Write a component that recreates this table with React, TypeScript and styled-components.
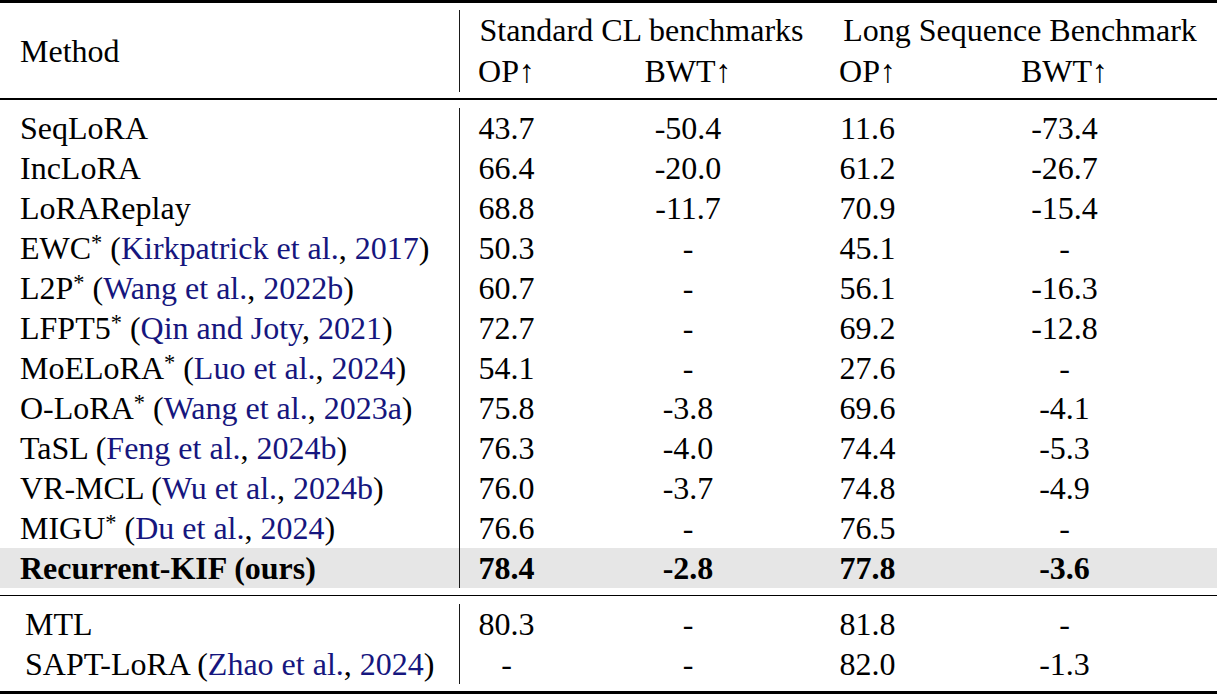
import React from 'react';
import styled, { createGlobalStyle } from 'styled-components';

const GlobalStyle = createGlobalStyle`
  html, body {
    margin: 0;
    padding: 0;
    background: #fff;
  }
  body {
    font-family: "Liberation Serif", "Times New Roman", serif;
    color: #000;
  }
`;

const COLS = '459px 94px 270px 89px 1fr';

const Table = styled.div`
  width: 1217px;
  font-size: 32px;
  line-height: 40px;
`;

const Rule = styled.div<{ $h: number }>`
  height: ${p => p.$h}px;
  background: #000;
`;

const Section = styled.div<{ $top: number; $bottom: number }>`
  padding-top: ${p => p.$top}px;
  padding-bottom: ${p => p.$bottom}px;
`;

const HeadGrid = styled.div`
  display: grid;
  grid-template-columns: ${COLS};
  grid-template-rows: 41px 41px;
  line-height: 41px;
`;

const MethodHead = styled.div`
  grid-row: 1 / 3;
  grid-column: 1;
  display: flex;
  align-items: center;
  padding-left: 20px;
`;

const GroupHead = styled.div<{ $col: string; $line?: boolean }>`
  grid-row: 1;
  grid-column: ${p => p.$col};
  text-align: center;
  white-space: nowrap;
  border-left: ${p => (p.$line ? '1px solid #1a1a1a' : 'none')};
`;

const SubHead = styled.div<{ $line?: boolean }>`
  grid-row: 2;
  text-align: center;
  white-space: nowrap;
  border-left: ${p => (p.$line ? '1px solid #1a1a1a' : 'none')};
`;

const Row = styled.div<{ $hl?: boolean; $bold?: boolean }>`
  display: grid;
  grid-template-columns: ${COLS};
  height: 40px;
  background: ${p => (p.$hl ? '#e6e6e6' : 'transparent')};
  font-weight: ${p => (p.$bold ? 700 : 400)};
`;

const NameCell = styled.div<{ $indent: number }>`
  padding-left: ${p => p.$indent}px;
  white-space: nowrap;
`;

const NumCell = styled.div<{ $line?: boolean }>`
  text-align: center;
  white-space: nowrap;
  box-sizing: border-box;
  border-left: ${p => (p.$line ? '1px solid #1a1a1a' : 'none')};
`;

const Star = styled.sup`
  font-size: 0.7em;
  line-height: 0;
  vertical-align: 0.42em;
`;

const Cite = styled.span`
  color: #16167e;
`;

type Entry = {
  name: string;
  star?: boolean;
  cite?: [string, string];
  vals: [string, string, string, string];
};

const body: Entry[] = [
  { name: 'SeqLoRA', vals: ['43.7', '-50.4', '11.6', '-73.4'] },
  { name: 'IncLoRA', vals: ['66.4', '-20.0', '61.2', '-26.7'] },
  { name: 'LoRAReplay', vals: ['68.8', '-11.7', '70.9', '-15.4'] },
  { name: 'EWC', star: true, cite: ['Kirkpatrick et al.', '2017'], vals: ['50.3', '-', '45.1', '-'] },
  { name: 'L2P', star: true, cite: ['Wang et al.', '2022b'], vals: ['60.7', '-', '56.1', '-16.3'] },
  { name: 'LFPT5', star: true, cite: ['Qin and Joty', '2021'], vals: ['72.7', '-', '69.2', '-12.8'] },
  { name: 'MoELoRA', star: true, cite: ['Luo et al.', '2024'], vals: ['54.1', '-', '27.6', '-'] },
  { name: 'O-LoRA', star: true, cite: ['Wang et al.', '2023a'], vals: ['75.8', '-3.8', '69.6', '-4.1'] },
  { name: 'TaSL', cite: ['Feng et al.', '2024b'], vals: ['76.3', '-4.0', '74.4', '-5.3'] },
  { name: 'VR-MCL', cite: ['Wu et al.', '2024b'], vals: ['76.0', '-3.7', '74.8', '-4.9'] },
  { name: 'MIGU', star: true, cite: ['Du et al.', '2024'], vals: ['76.6', '-', '76.5', '-'] },
];

const ours: Entry = { name: 'Recurrent-KIF (ours)', vals: ['78.4', '-2.8', '77.8', '-3.6'] };

const extra: Entry[] = [
  { name: 'MTL', vals: ['80.3', '-', '81.8', '-'] },
  { name: 'SAPT-LoRA', cite: ['Zhao et al.', '2024'], vals: ['-', '-', '82.0', '-1.3'] },
];

const DataRow = ({ e, indent = 20, hl = false }: { e: Entry; indent?: number; hl?: boolean }) => (
  <Row $hl={hl} $bold={hl}>
    <NameCell $indent={indent}>
      {e.name}
      {e.star && <Star>*</Star>}
      {e.cite && (
        <>
          {' ('}
          <Cite>{e.cite[0]}</Cite>, <Cite>{e.cite[1]}</Cite>)
        </>
      )}
    </NameCell>
    {e.vals.map((v, i) => (
      <NumCell key={i} $line={i === 0}>
        {v}
      </NumCell>
    ))}
  </Row>
);

export default function App() {
  return (
    <>
      <GlobalStyle />
      <Table>
        <Rule $h={3} />
        <Section $top={7} $bottom={6}>
          <HeadGrid>
            <MethodHead>Method</MethodHead>
            <GroupHead $col="2 / 4" $line>Standard CL benchmarks</GroupHead>
            <GroupHead $col="4 / 6">Long Sequence Benchmark</GroupHead>
            <SubHead $line>OP↑</SubHead>
            <SubHead>BWT↑</SubHead>
            <SubHead>OP↑</SubHead>
            <SubHead>BWT↑</SubHead>
          </HeadGrid>
        </Section>
        <Rule $h={1.5} />
        <Section $top={8} $bottom={7}>
          {body.map(e => (
            <DataRow key={e.name} e={e} />
          ))}
          <DataRow e={ours} hl />
        </Section>
        <Rule $h={1.5} />
        <Section $top={8} $bottom={7}>
          {extra.map(e => (
            <DataRow key={e.name} e={e} indent={25} />
          ))}
        </Section>
        <Rule $h={3} />
      </Table>
    </>
  );
}
